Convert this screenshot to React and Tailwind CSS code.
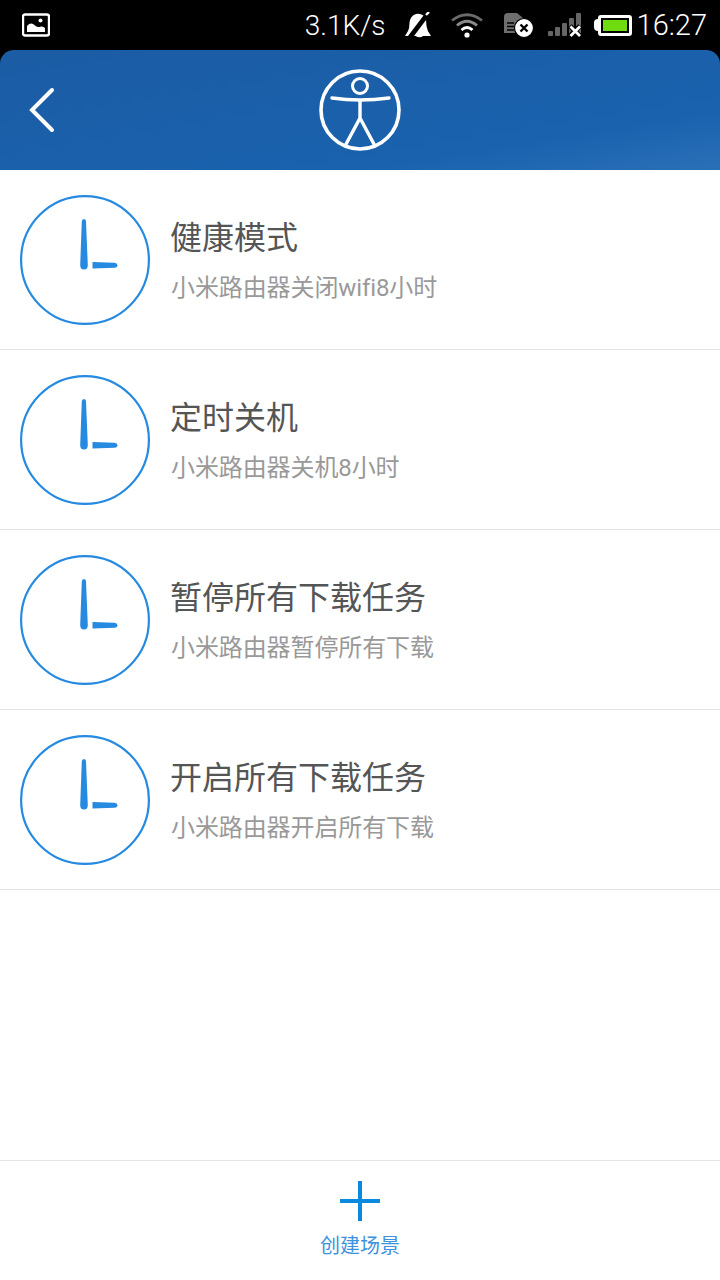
const FONT = "font-['Noto_Sans_CJK_SC','Noto_Sans',sans-serif]"

const scenes = [
  { title: "健康模式", desc: "小米路由器关闭wifi8小时" },
  { title: "定时关机", desc: "小米路由器关机8小时" },
  { title: "暂停所有下载任务", desc: "小米路由器暂停所有下载" },
  { title: "开启所有下载任务", desc: "小米路由器开启所有下载" },
]

const ClockIcon = () => (
  <svg width="130" height="130" viewBox="0 0 130 130" className="shrink-0">
    <circle cx="65" cy="65" r="63.9" fill="none" stroke="#268ae0" strokeWidth="2.2" />
    <path d="M61.8 26.5 Q61.8 24 64 24 Q66 24 66 26.5 L67.8 70 Q67.8 74.5 64 74.5 Q60.2 74.5 60.2 70 Z" fill="#268ae0" />
    <path d="M72.5 67 L94.5 67.8 Q97.4 68.2 97.4 70.3 Q97.4 72.6 94.5 72.8 L72.5 73.4 Z" fill="#268ae0" />
  </svg>
)

const PictureIcon = () => (
  <svg width="28" height="24" viewBox="0 0 28 24">
    <rect x="1" y="1.5" width="26" height="21" rx="2" fill="none" stroke="#fff" strokeWidth="2.4" />
    <circle cx="18.5" cy="7.5" r="2" fill="#fff" />
    <path d="M5 19 L5 13 Q9 8.5 13 12.5 Q16 15 19 13.5 Q21 13 23 15 L23 19 Z" fill="#fff" />
  </svg>
)

const MuteIcon = () => (
  <svg width="27" height="26" viewBox="0 0 27 26">
    <path d="M0 24 L3 19 Q4.5 16 4.5 11 Q5 4 11 2 Q15 1 18.5 3.5 L3 24 Z" fill="#fff" />
    <path d="M9 24 L21 8 L21.5 14 Q22 19 26 24 L18 24 Q16 26 13 25 Q11.5 25 11 24 Z" fill="#fff" />
    <path d="M21 3 L24 0" stroke="#fff" strokeWidth="2.4" />
  </svg>
)

const WifiIcon = () => (
  <svg width="34" height="26" viewBox="0 0 34 26">
    <path d="M2 8.5 Q17 -3 32 8.5" fill="none" stroke="#6a6a6a" strokeWidth="2.8" />
    <path d="M7 13.5 Q17 5 27 13.5" fill="none" stroke="#8a8a8a" strokeWidth="2.8" />
    <path d="M11.5 18 Q17 13 22.5 18" fill="none" stroke="#fff" strokeWidth="2.8" />
    <circle cx="17" cy="23" r="2.6" fill="#fff" />
  </svg>
)

const SimIcon = () => (
  <svg width="32" height="28" viewBox="0 0 32 28">
    <path d="M1 6 Q1 2 5 2 L14 2 L20 7 L20 22 L1 22 Z" fill="#6e6e6e" />
    <path d="M4 12 H11 M4 15.5 H11 M4 19 H11" stroke="#000" strokeWidth="1.4" />
    <circle cx="21" cy="17" r="9.5" fill="#fff" stroke="#000" strokeWidth="1.2" />
    <path d="M17.5 13.5 L24.5 20.5 M24.5 13.5 L17.5 20.5" stroke="#000" strokeWidth="2.4" />
  </svg>
)

const SignalIcon = () => (
  <svg width="34" height="26" viewBox="0 0 34 26">
    <rect x="0" y="19" width="5" height="5" rx="1" fill="#666" />
    <rect x="7" y="15" width="5" height="9" rx="1" fill="#666" />
    <rect x="14" y="11" width="5" height="13" rx="1" fill="#666" />
    <rect x="21" y="6" width="5" height="18" rx="1" fill="#666" />
    <rect x="28" y="1" width="5" height="23" rx="1" fill="#666" />
    <path d="M22 14 L32 24 M32 14 L22 24" stroke="#000" strokeWidth="5" />
    <path d="M22.5 14.5 L32 24 M32 14.5 L22.5 24" stroke="#fff" strokeWidth="2.8" />
  </svg>
)

const BatteryIcon = () => (
  <div className="flex items-center">
    <div className="w-1 h-3 bg-white rounded-l-sm" />
    <div className="w-[34px] h-[21px] border-[3px] border-white rounded-[3px] p-[2px]">
      <div className="w-full h-full bg-[#6fdc10]" />
    </div>
  </div>
)

const PersonIcon = () => (
  <svg width="82" height="82" viewBox="0 0 82 82">
    <circle cx="41" cy="41" r="39" fill="none" stroke="#fff" strokeWidth="3.6" />
    <circle cx="41" cy="17" r="7.5" fill="none" stroke="#fff" strokeWidth="3" />
    <path d="M13 29 Q41 33 70 29" fill="none" stroke="#fff" strokeWidth="3.4" strokeLinecap="round" />
    <path d="M41 31 L41 49 L26 77 M41 49 L56 77" fill="none" stroke="#fff" strokeWidth="3.4" />
  </svg>
)

const SceneRow = ({ title, desc }) => (
  <div className="h-[180px] pl-5 flex items-center gap-[21px] border-b border-[#e4e4e4]">
    <ClockIcon />
    <div>
      <div className="text-[32px] leading-[44px] -ml-[1px] -translate-y-[1px] text-[#555555]">{title}</div>
      <div className="font-['Roboto','Noto_Sans_CJK_SC',sans-serif] text-[24px] leading-[34px] mt-[13px] tracking-[-0.1px] text-[#999999]">
        {desc}
      </div>
    </div>
  </div>
)

export default function App() {
  return (
    <div className={`w-[720px] h-[1280px] flex flex-col bg-white ${FONT}`}>
      <div className="h-[50px] bg-black flex items-center text-white font-['Roboto',sans-serif]">
        <div className="ml-[22px]">
          <PictureIcon />
        </div>
        <div className="ml-auto flex items-center">
          <span className="leading-none font-light text-[28px] mt-[1px]">3.1K/s</span>
          <div className="ml-[19px]"><MuteIcon /></div>
          <div className="ml-[18px]"><WifiIcon /></div>
          <div className="ml-[19px]"><SimIcon /></div>
          <div className="ml-[13px]"><SignalIcon /></div>
          <div className="ml-[12px]"><BatteryIcon /></div>
          <span className="ml-[5px] mr-[13px] leading-none font-light text-[29px] mt-[1px]">16:27</span>
        </div>
      </div>

      <div className="bg-black">
        <div className="h-[120px] rounded-t-[14px] bg-gradient-to-br from-[#1b5ca4] via-[#1a62ae] via-75% to-[#2a70b8] relative flex items-center justify-center">
          <svg width="28" height="46" viewBox="0 0 28 46" className="absolute left-[28px] top-[37px]">
            <path d="M24 3 L4 23 L24 43" fill="none" stroke="#fff" strokeWidth="4" strokeLinecap="round" strokeLinejoin="miter" />
          </svg>
          <PersonIcon />
        </div>
      </div>

      <div className="flex-1">
        {scenes.map((s) => (
          <SceneRow key={s.title} title={s.title} desc={s.desc} />
        ))}
      </div>

      <div className="h-[120px] border-t border-[#e4e4e4] flex flex-col items-center">
        <svg width="40" height="40" viewBox="0 0 40 40" className="mt-[20px]">
          <path d="M18 0 H22 V18 H40 V22 H22 V40 H18 V22 H0 V18 H18 Z" fill="#0a8ade" />
        </svg>
        <div className="text-[20px] leading-[28px] mt-[10px] text-[#3d92de]">创建场景</div>
      </div>
    </div>
  )
}
